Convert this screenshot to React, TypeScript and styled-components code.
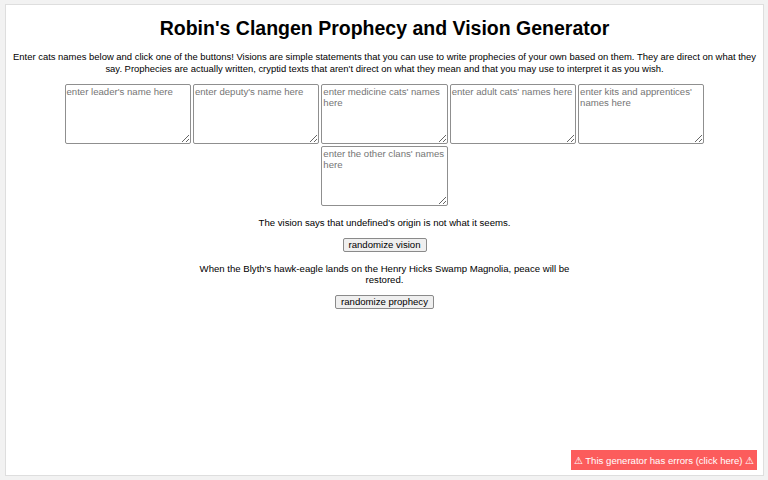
import React, { useState } from "react";
import styled, { createGlobalStyle } from "styled-components";

const GlobalStyle = createGlobalStyle`
    html, body {
        margin: 0;
        padding: 0;
        background-color: #f2f2f2;
        font-family: "Liberation Sans", Arial, sans-serif;
    }
    * {
        box-sizing: border-box;
    }
`;

const fields = [
    "enter leader's name here",
    "enter deputy's name here",
    "enter medicine cats' names here",
    "enter adult cats' names here",
    "enter kits and apprentices' names here",
    "enter the other clans' names here",
];

export default function App() {
    const [vision] = useState<string>("The vision says that undefined's origin is not what it seems.");
    const [prophecy] = useState<string>(
        "When the Blyth's hawk-eagle lands on the Henry Hicks Swamp Magnolia, peace will be restored."
    );

    return (
        <>
            <GlobalStyle />
            <Page>
                <Title>Robin's Clangen Prophecy and Vision Generator</Title>
                <Intro>
                    Enter cats names below and click one of the buttons! Visions are simple statements that you can
                    use to write prophecies of your own based on them. They are direct on what they say. Prophecies
                    are actually written, cryptid texts that aren't direct on what they mean and that you may use to
                    interpret it as you wish.
                </Intro>
                <Fields>
                    {fields.map((f) => (
                        <NameBox key={f} placeholder={f} />
                    ))}
                </Fields>
                <Output>{vision}</Output>
                <Button>randomize vision</Button>
                <Output $narrow>{prophecy}</Output>
                <Button>randomize prophecy</Button>
            </Page>
            <ErrorBadge>⚠ This generator has errors (click here) ⚠</ErrorBadge>
        </>
    );
}

const Page = styled.div`
    margin: 4px 4px 4px 5px;
    height: 472px;
    background-color: #ffffff;
    border: 1px solid #dedede;
    display: flex;
    flex-direction: column;
    align-items: center;
    padding: 12px 3px 0 3px;
`;

const Title = styled.h1`
    margin: 0;
    font-size: 19.5px;
    line-height: 23px;
    font-weight: 700;
    color: #000;
`;

const Intro = styled.p`
    margin: 11px 0 9px 0;
    font-size: 9.45px;
    line-height: 12px;
    text-align: center;
    color: #000;
`;

const Fields = styled.div`
    width: 640px;
    display: flex;
    flex-wrap: wrap;
    justify-content: center;
    gap: 2px 2px;
`;

const NameBox = styled.textarea`
    width: 126.4px;
    height: 60px;
    padding: 1px 1px;
    border: 1px solid #8f8f8f;
    border-radius: 2px;
    font-family: "Liberation Sans", Arial, sans-serif;
    font-size: 9.6px;
    line-height: 11px;
    resize: both;

    &::placeholder {
        color: #757575;
    }
`;

const Output = styled.p<{ $narrow?: boolean }>`
    margin: 11px 0 10px 0;
    max-width: ${(p) => (p.$narrow ? "384px" : "none")};
    font-size: 9.6px;
    line-height: 11px;
    text-align: center;
    color: #000;
`;

const Button = styled.button`
    font-family: "Liberation Sans", Arial, sans-serif;
    font-size: 9.6px;
    line-height: 12px;
    padding: 0 5px;
    height: 14px;
    background-color: #efefef;
    border: 1px solid #8a8a8a;
    border-radius: 2px;
    color: #000;
`;

const ErrorBadge = styled.div`
    position: fixed;
    right: 11px;
    bottom: 10px;
    width: 186px;
    height: 20px;
    display: flex;
    align-items: center;
    justify-content: center;
    background-color: #fc5c5c;
    color: #ffffff;
    font-size: 9.6px;
    cursor: pointer;
`;
